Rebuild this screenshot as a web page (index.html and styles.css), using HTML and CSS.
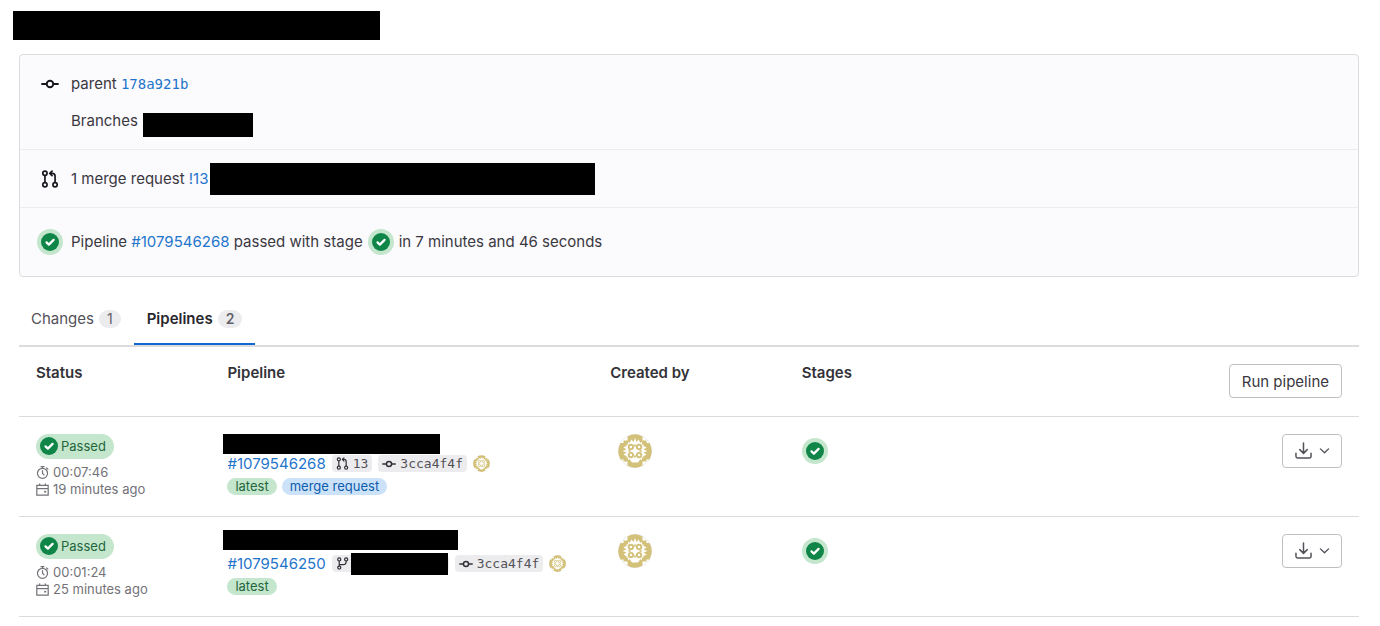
FILE: index.html
```html
<!DOCTYPE html>
<html lang="en">
<head>
    <meta charset="UTF-8">
    <meta name="viewport" content="width=device-width, initial-scale=1.0">
    <title>Commit pipelines</title>
    <link rel="stylesheet" href="styles.css">
</head>
<body>
    <!-- shared icons -->
    <svg class="sprite" aria-hidden="true">
        <symbol id="commit" viewBox="0 0 16 16">
            <circle cx="8" cy="8" r="2.9" fill="none" stroke="currentColor" stroke-width="1.7"/>
            <path d="M.9 8h3.6M11.5 8h3.6" fill="none" stroke="currentColor" stroke-width="1.7" stroke-linecap="round"/>
        </symbol>
        <symbol id="merge" viewBox="0 0 16 16">
            <g fill="none" stroke="currentColor" stroke-width="1.5">
                <circle cx="3.5" cy="2.9" r="1.9"/>
                <circle cx="3.5" cy="13.1" r="1.9"/>
                <circle cx="12.5" cy="13.1" r="1.9"/>
                <path d="M3.5 4.8v6.4M12.5 11.2V5.5A2.5 2.5 0 0 0 10 3H8.2"/>
                <path d="M9.8 1 7.8 3l2 2" stroke-linecap="round" stroke-linejoin="round"/>
            </g>
        </symbol>
        <symbol id="branch" viewBox="0 0 16 16">
            <g fill="none" stroke="currentColor" stroke-width="1.5">
                <circle cx="4" cy="3" r="1.9"/>
                <circle cx="4" cy="13" r="1.9"/>
                <circle cx="12.5" cy="3" r="1.9"/>
                <path d="M4 4.9v6.2M4 9.5h4.5a4 4 0 0 0 4-4V4.9"/>
            </g>
        </symbol>
        <symbol id="passed" viewBox="0 0 16 16">
            <circle cx="8" cy="8" r="8" fill="#108548"/>
            <path d="M4.9 8.3 7 10.3l4.2-4.2" fill="none" stroke="#fff" stroke-width="2" stroke-linecap="round" stroke-linejoin="round"/>
        </symbol>
        <symbol id="timer" viewBox="0 0 16 16">
            <g fill="none" stroke="currentColor" stroke-width="1.5" stroke-linecap="round">
                <circle cx="8" cy="9" r="6.2"/>
                <path d="M6.2.8h3.6M8 1v1.5M8 5.8V9l1.8 1.8M13 2.3l1.6 1.6"/>
            </g>
        </symbol>
        <symbol id="calendar" viewBox="0 0 16 16">
            <g fill="none" stroke="currentColor" stroke-width="1.5">
                <path d="M1 3h14v11.8H1zM1 6.8h14M4.5.5V3M11.5.5V3"/>
                <path d="M10 10.7h2.5" stroke-width="2"/>
            </g>
        </symbol>
        <symbol id="download" viewBox="0 0 16 16">
            <g fill="none" stroke="currentColor" stroke-width="1.4" stroke-linecap="round" stroke-linejoin="round">
                <path d="M8 .9v9.6M4.5 7.2 8 10.7l3.5-3.5"/>
                <path d="M.9 10.5v3A1.5 1.5 0 0 0 2.4 15h11.2a1.5 1.5 0 0 0 1.5-1.5v-3"/>
            </g>
        </symbol>
        <symbol id="chevron" viewBox="0 0 16 16">
            <path d="M3 6 8 10.8 13 6" fill="none" stroke="currentColor" stroke-width="1.7" stroke-linecap="round" stroke-linejoin="round"/>
        </symbol>
        <symbol id="identicon" viewBox="0 0 34 34">
            <circle cx="17" cy="17" r="16.5" fill="#fff" stroke="#ececef"/>
            <g fill="#d3c17a">
                <path d="M9.5 2.5Q17-2 24.5 2.5V7L22.5 9 20.5 5.5 18.5 8 17 4 15.500 8 13.5 5.5 11.5 9 9.5 7z"/>
                <path d="M9.5 31.5Q17 36 24.5 31.5V27L22.500 25 20 28.5H14L11.500 25 9.5 27z"/>
                <path d="M2.500 9H7L9 11.500 5.500 13.500 8.500 15.500 4.500 17 8.500 18.500 5.500 20.500 9 22.500 7 25.500H2.500Q-2 17 2.500 9z"/>
                <path d="M31.500 9H27L25 11.500 28.500 13.500 25.500 15.500 29.500 17 25.500 18.500 28.500 20.500 25 22.500 27 25.500H31.500Q36 17 31.500 9z"/>
                <path d="M5.500 6.500h4.500v4h-4.500zM24 6.500h4.500v4h-4.500zM5.500 23.500h4.500v4h-4.500zM24 23.500h4.500v4h-4.500z"/>
                <path d="m17 9.500 1 2-1 2-1-2zM17 20.500l1 2-1 2-1-2zM9.500 17l2-1 2 1-2 1zM20.500 17l2-1 2 1-2 1z"/>
            </g>
            <g fill="#fff" stroke="#d3c17a" stroke-width="1.900">
                <circle cx="12.900" cy="12.900" r="2.200"/>
                <circle cx="21.100" cy="12.900" r="2.200"/>
                <circle cx="12.900" cy="21.100" r="2.200"/>
                <circle cx="21.100" cy="21.100" r="2.200"/>
            </g>
        </symbol>
    </svg>

    <div class="redacted redacted-title"></div>

    <section class="commit-info">
        <div class="info-row info-parent">
            <span class="info-icon"><svg class="icon-lg"><use href="#commit"/></svg></span>
            <div>
                <p>parent <a class="sha" href="#">178a921b</a></p>
                <p class="branches">Branches <span class="redacted redacted-branch"></span></p>
            </div>
        </div>
        <div class="info-row info-merge">
            <span class="info-icon"><svg class="icon-lg"><use href="#merge"/></svg></span>
            <p class="merge-line"><span>1 merge request <a href="#">!13</a></span><span class="redacted redacted-merge"></span></p>
        </div>
        <div class="info-row info-pipeline">
            <span class="info-icon"><a class="status-circle" href="#" aria-label="Passed"><svg><use href="#passed"/></svg></a></span>
            <p class="pipeline-line">
                <span>Pipeline <a href="#">#1079546268</a> passed with stage</span>
                <a class="status-circle" href="#" aria-label="Passed"><svg><use href="#passed"/></svg></a>
                <span>in 7 minutes and 46 seconds</span>
            </p>
        </div>
    </section>

    <nav class="tabs">
        <a class="tab" href="#">Changes <span class="count">1</span></a>
        <a class="tab active" href="#">Pipelines <span class="count">2</span></a>
    </nav>

    <table class="pipelines">
        <colgroup>
            <col class="col-one">
            <col class="col-two">
            <col class="col-one">
            <col class="col-one">
            <col class="col-two">
        </colgroup>
        <thead>
            <tr>
                <th>Status</th>
                <th>Pipeline</th>
                <th>Created by</th>
                <th>Stages</th>
                <th class="actions"><button class="btn" type="button">Run pipeline</button></th>
            </tr>
        </thead>
        <tbody>
            <tr>
                <td>
                    <a class="status-badge" href="#"><svg><use href="#passed"/></svg>Passed</a>
                    <div class="time"><svg><use href="#timer"/></svg>00:07:46</div>
                    <div class="time"><svg><use href="#calendar"/></svg>19 minutes ago</div>
                </td>
                <td>
                    <div class="redacted redacted-name"></div>
                    <div class="refs">
                        <a href="#">#1079546268</a>
                        <span class="chip"><svg><use href="#merge"/></svg>13</span>
                        <span class="chip"><svg class="wide"><use href="#commit"/></svg>3cca4f4f</span>
                        <svg class="avatar-sm"><use href="#identicon"/></svg>
                    </div>
                    <div class="labels">
                        <span class="label green">latest</span>
                        <span class="label blue">merge request</span>
                    </div>
                </td>
                <td><svg class="avatar"><use href="#identicon"/></svg></td>
                <td><a class="status-circle stage" href="#" aria-label="Passed"><svg><use href="#passed"/></svg></a></td>
                <td class="actions">
                    <button class="btn btn-download" type="button" aria-label="Download artifacts">
                        <svg class="icon-md"><use href="#download"/></svg>
                        <svg class="icon-sm"><use href="#chevron"/></svg>
                    </button>
                </td>
            </tr>
            <tr>
                <td>
                    <a class="status-badge" href="#"><svg><use href="#passed"/></svg>Passed</a>
                    <div class="time"><svg><use href="#timer"/></svg>00:01:24</div>
                    <div class="time"><svg><use href="#calendar"/></svg>25 minutes ago</div>
                </td>
                <td>
                    <div class="redacted redacted-name long"></div>
                    <div class="refs">
                        <a href="#">#1079546250</a>
                        <span class="chip chip-branch"><svg><use href="#branch"/></svg><span class="redacted redacted-ref"></span></span>
                        <span class="chip"><svg class="wide"><use href="#commit"/></svg>3cca4f4f</span>
                        <svg class="avatar-sm"><use href="#identicon"/></svg>
                    </div>
                    <div class="labels">
                        <span class="label green">latest</span>
                    </div>
                </td>
                <td><svg class="avatar"><use href="#identicon"/></svg></td>
                <td><a class="status-circle stage" href="#" aria-label="Passed"><svg><use href="#passed"/></svg></a></td>
                <td class="actions">
                    <button class="btn btn-download" type="button" aria-label="Download artifacts">
                        <svg class="icon-md"><use href="#download"/></svg>
                        <svg class="icon-sm"><use href="#chevron"/></svg>
                    </button>
                </td>
            </tr>
        </tbody>
    </table>
</body>
</html>
```
FILE: styles.css
```css
* {
    box-sizing: border-box;
}

body {
    margin: 0;
    padding: 11px 21px 0 19px;
    font-family: Inter, "Liberation Sans", sans-serif;
    font-size: 15px;
    line-height: 20px;
    color: #3a383f;
    background-color: #fff;
}

a {
    color: #1f75cb;
    text-decoration: none;
}

p {
    margin: 0;
}

svg {
    flex: none;
}

.sprite {
    display: none;
}

.redacted {
    display: block;
    background-color: #000;
}

.redacted-title {
    width: 367px;
    height: 29px;
    margin: 0 0 14px -6px;
}

/* commit box */
.commit-info {
    border: 1px solid #dcdcde;
    border-radius: 4px;
    background-color: #fbfafd;
}

.info-row {
    display: flex;
    padding: 0 17px;
}

.info-row + .info-row {
    border-top: 1px solid #ececef;
}

.info-icon {
    display: flex;
    flex: none;
    align-items: center;
    justify-content: center;
    width: 26px;
    height: 20px;
    margin-right: 8px;
    color: #18171d;
}

.icon-lg {
    width: 18px;
    height: 18px;
}

.sha {
    font-family: "DejaVu Sans Mono", monospace;
    font-size: 14px;
}

.info-parent {
    padding-top: 19px;
    padding-bottom: 12px;
}

.branches {
    display: flex;
    gap: 5px;
    margin-top: 17px;
}

.redacted-branch {
    width: 110px;
    height: 24px;
    margin-top: 2px;
}

.info-merge {
    align-items: center;
    height: 58px;
}

.merge-line,
.pipeline-line {
    display: flex;
    align-items: center;
}

.merge-line {
    gap: 2px;
}

.pipeline-line {
    gap: 5px;
}

.redacted-merge {
    width: 385px;
    height: 32px;
}

.info-pipeline {
    align-items: center;
    height: 69px;
}

.status-circle {
    display: inline-flex;
    flex: none;
    align-items: center;
    justify-content: center;
    width: 26px;
    height: 26px;
    border-radius: 50%;
    background-color: #c3e6cd;
    vertical-align: top;
}

.status-circle svg {
    width: 18px;
    height: 18px;
}

/* tabs */
.tabs {
    display: flex;
    margin-top: 15px;
    border-bottom: 2px solid #dcdcde;
}

.tab {
    display: flex;
    align-items: center;
    gap: 5px;
    height: 53px;
    padding: 0 13px 0 12px;
    color: #535158;
}

.tab.active {
    padding: 0 13px;
    font-weight: 600;
    color: #28272d;
    box-shadow: inset 0 -2px 0 #1068d3;
}

.count {
    padding: 0 8px;
    border-radius: 9px;
    background-color: #ececef;
    color: #626168;
    font-size: 14px;
    line-height: 18px;
}

/* pipelines table */
.pipelines {
    width: 100%;
    table-layout: fixed;
    border-collapse: collapse;
}

.col-one {
    width: 14.285%;
}

.col-two {
    width: 28.57%;
}

.pipelines th,
.pipelines td {
    padding: 17px 17px 0;
    border-bottom: 1px solid #dcdcde;
    text-align: left;
    vertical-align: top;
}

.pipelines th {
    height: 69px;
    padding-top: 16px;
    font-weight: 600;
    color: #333238;
}

.pipelines td {
    height: 100px;
}

.pipelines .actions {
    padding-top: 17px;
    text-align: right;
}

.btn {
    height: 34px;
    padding: 0 12px;
    border: 1px solid #bfbfc3;
    border-radius: 4px;
    background-color: #fff;
    color: #3a383f;
    font-family: inherit;
    font-size: 15px;
    vertical-align: top;
    cursor: pointer;
}

.btn-download {
    display: inline-flex;
    align-items: center;
    gap: 6px;
    padding: 0 10px 0 12px;
    color: #535158;
}

.icon-md {
    width: 17px;
    height: 17px;
}

.icon-sm {
    width: 13px;
    height: 13px;
}

.status-badge {
    display: inline-flex;
    align-items: center;
    gap: 3px;
    height: 25px;
    margin-bottom: 5px;
    padding: 0 8px 0 4px;
    border-radius: 13px;
    background-color: #c3e6cd;
    color: #24663b;
    font-size: 13px;
    vertical-align: top;
}

.status-badge svg {
    width: 18px;
    height: 18px;
}

.time {
    display: flex;
    align-items: center;
    gap: 4px;
    color: #737278;
    font-size: 13px;
    line-height: 17px;
}

.time svg {
    width: 13px;
    height: 13px;
}

.redacted-name {
    width: 217px;
    height: 20px;
    margin-left: -4px;
}

.redacted-name.long {
    width: 235px;
    margin-top: -4px;
    margin-bottom: 4px;
}

.refs {
    display: flex;
    align-items: center;
    gap: 6px;
}

.chip {
    display: flex;
    align-items: center;
    gap: 4px;
    height: 17px;
    padding: 0 4px;
    border-radius: 4px;
    background-color: #ececef;
    color: #535158;
    font-family: "DejaVu Sans Mono", monospace;
    font-size: 13px;
}

.chip-branch {
    gap: 2px;
    padding-right: 1px;
}

.chip svg {
    width: 13px;
    height: 13px;
    color: #333238;
}

.chip .wide {
    width: 14px;
    height: 14px;
}

.redacted-ref {
    width: 97px;
    height: 22px;
}

.avatar-sm {
    width: 17px;
    height: 17px;
}

.labels {
    display: flex;
    gap: 5px;
    margin-top: 4px;
}

.label {
    padding: 0 8px;
    border-radius: 9px;
    font-size: 13px;
    line-height: 17px;
}

.label.green {
    background-color: #c3e6cd;
    color: #24663b;
}

.label.blue {
    background-color: #cbe2f9;
    color: #0b5cad;
}

.avatar {
    display: block;
    width: 34px;
    height: 34px;
    margin-left: 8px;
}

.stage {
    margin-top: 4px;
}
```
